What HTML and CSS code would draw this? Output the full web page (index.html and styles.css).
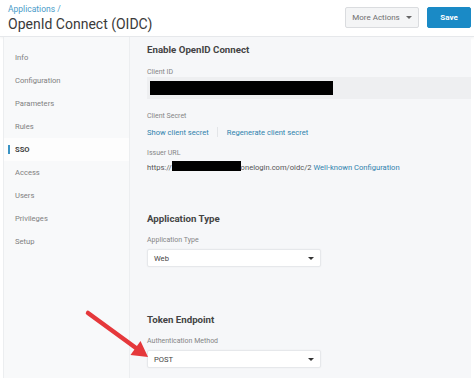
FILE: index.html
```html
<!DOCTYPE html>
<html lang="en">
<head>
    <meta charset="UTF-8">
    <meta name="viewport" content="width=device-width, initial-scale=1.0">
    <title>OpenId Connect (OIDC)</title>
    <link rel="stylesheet" href="styles.css">
</head>
<body>
    <div class="page">
        <div class="header">
            <div class="title-block">
                <a class="crumb" href="#">Applications /</a>
                <h1 class="title">OpenId Connect (OIDC)</h1>
            </div>
            <div class="actions">
                <button class="btn btn-more">More Actions <span class="caret"></span></button>
                <button class="btn btn-save">Save</button>
            </div>
        </div>

        <div class="main">
            <ul class="sidebar">
                <li>Info</li>
                <li>Configuration</li>
                <li>Parameters</li>
                <li>Rules</li>
                <li class="active">SSO</li>
                <li>Access</li>
                <li>Users</li>
                <li>Privileges</li>
                <li>Setup</li>
            </ul>

            <div class="content">
                <h2 class="section-title first">Enable OpenID Connect</h2>
                <label class="field-label label-client">Client ID</label>
                <div class="readonly-field"><span class="redacted redacted-id"></span></div>

                <label class="field-label label-secret">Client Secret</label>
                <div class="links">
                    <a href="#">Show client secret</a>
                    <span class="divider"></span>
                    <a href="#">Regenerate client secret</a>
                </div>

                <label class="field-label label-issuer">Issuer URL</label>
                <div class="issuer">https://<span class="redacted redacted-host"></span>onelogin.com/oidc/2 <a href="#">Well-known Configuration</a></div>

                <h2 class="section-title app-type">Application Type</h2>
                <label class="field-label label-select">Application Type</label>
                <div class="select">Web <span class="caret"></span></div>

                <h2 class="section-title token">Token Endpoint</h2>
                <label class="field-label label-select">Authentication Method</label>
                <div class="select">POST <span class="caret"></span></div>
            </div>
        </div>

        <svg class="arrow" width="474" height="381" viewBox="0 0 474 381">
            <line x1="88" y1="313" x2="136" y2="348" stroke="#e5383b" stroke-width="4.5" stroke-linecap="round"/>
            <polygon points="148,357 130.5,355 140.5,341" fill="#e5383b"/>
        </svg>
    </div>
</body>
</html>
```

FILE: styles.css
```css
body {
    margin: 0;
    font-family: Roboto, "Liberation Sans", sans-serif;
    background-color: #fff;
}

.page {
    position: relative;
    width: 474px;
    height: 381px;
    overflow: hidden;
}

.header {
    height: 36px;
    display: flex;
    justify-content: space-between;
    align-items: flex-start;
    padding: 0 3px 0 8px;
    border-bottom: 1px solid #e6e8eb;
    box-shadow: 0 1px 3px rgba(0, 0, 0, 0.06);
}

.crumb {
    display: block;
    margin-top: 4px;
    font-size: 8.5px;
    line-height: 10px;
    color: #4a9cc9;
    text-decoration: none;
}

.title {
    margin: 2px 0 0 0;
    font-size: 14px;
    line-height: 16px;
    font-weight: 400;
    color: #3a3a3a;
}

.actions {
    display: flex;
    gap: 8px;
    margin-top: 7px;
}

.btn {
    height: 21px;
    border-radius: 2px;
    font-family: Roboto, "Liberation Sans", sans-serif;
    font-size: 8px;
    padding: 0;
}

.btn-more {
    width: 74px;
    background-color: #f4f5f6;
    border: 1px solid #dadcdf;
    color: #6e6e6e;
}

.btn-more .caret {
    display: inline-block;
    margin-left: 4px;
    vertical-align: middle;
    border-left: 3px solid transparent;
    border-right: 3px solid transparent;
    border-top: 3px solid #666;
}

.btn-save {
    width: 44px;
    background-color: #1a8ac6;
    border: 1px solid #1a8ac6;
    color: #fff;
    font-weight: 700;
}

.main {
    display: flex;
    height: 341px;
    padding: 0 3px 0 3px;
}

.sidebar {
    width: 127px;
    margin: 0;
    padding: 9px 0 0 0;
    list-style: none;
    background-color: #f8f9fa;
    border-right: 1px solid #eceef0;
    border-left: 1px solid #eceef0;
    box-sizing: border-box;
}

.sidebar li {
    position: relative;
    height: 23px;
    line-height: 23px;
    padding-left: 11px;
    font-size: 7.6px;
    color: #7f7f7f;
}

.sidebar li.active {
    background-color: #fdfdfd;
    color: #444;
    font-weight: 700;
}

.sidebar li.active::before {
    content: "";
    position: absolute;
    left: 4px;
    top: 7px;
    width: 2px;
    height: 9px;
    background-color: #3a93c4;
}

.content {
    flex: 1;
    background-color: #f6f7f9;
    padding: 6px 0 0 17px;
}

.section-title {
    margin: 0;
    font-size: 9.7px;
    line-height: 14px;
    font-weight: 700;
    color: #444;
}

.app-type {
    margin-top: 39px;
}

.token {
    margin-top: 46px;
}

.field-label {
    display: block;
    font-size: 7px;
    line-height: 10px;
    color: #858585;
}

.label-client {
    margin-top: 10px;
}

.label-secret {
    margin-top: 12px;
}

.label-issuer {
    margin-top: 10px;
}

.label-select {
    margin-top: 9px;
}

.readonly-field {
    height: 22px;
    background-color: #eeeff1;
    display: flex;
    align-items: center;
    padding-left: 3px;
}

.redacted {
    display: inline-block;
    background-color: #000;
}

.redacted-id {
    width: 183px;
    height: 14px;
}

.redacted-host {
    width: 69px;
    height: 10px;
    vertical-align: -1px;
}

.links {
    display: flex;
    align-items: center;
    margin-top: 5px;
    height: 12px;
    font-size: 7.6px;
}

.links a,
.issuer a {
    color: #2f82ad;
    text-decoration: none;
}

.divider {
    width: 1px;
    height: 10px;
    background-color: #e3e5e8;
    margin: 0 9px 0 8px;
}

.issuer {
    margin-top: 3px;
    height: 12px;
    line-height: 12px;
    font-size: 7.6px;
    color: #555;
}

.select {
    width: 174px;
    height: 18px;
    margin-top: 4px;
    box-sizing: border-box;
    background-color: #fff;
    border: 1px solid #e6e8eb;
    border-radius: 2px;
    box-shadow: 0 0 2px rgba(0, 0, 0, 0.05);
    display: flex;
    justify-content: space-between;
    align-items: center;
    padding: 0 6px 0 6px;
    font-size: 7.6px;
    color: #444;
}

.select .caret {
    border-left: 3px solid transparent;
    border-right: 3px solid transparent;
    border-top: 3px solid #333;
}

.arrow {
    position: absolute;
    left: 0;
    top: 0;
    pointer-events: none;
}
```
